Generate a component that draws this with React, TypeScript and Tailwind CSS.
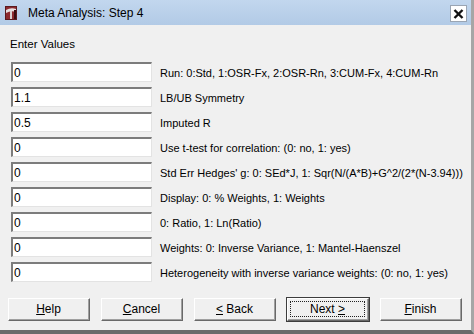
import React from 'react';

const rows: { value: string; label: string }[] = [
  { value: '0', label: 'Run: 0:Std, 1:OSR-Fx, 2:OSR-Rn, 3:CUM-Fx, 4:CUM-Rn' },
  { value: '1.1', label: 'LB/UB Symmetry' },
  { value: '0.5', label: 'Imputed R' },
  { value: '0', label: 'Use t-test for correlation: (0: no, 1: yes)' },
  { value: '0', label: "Std Err Hedges' g: 0: SEd*J, 1: Sqr(N/(A*B)+G^2/(2*(N-3.94)))" },
  { value: '0', label: 'Display: 0: % Weights, 1: Weights' },
  { value: '0', label: '0: Ratio, 1: Ln(Ratio)' },
  { value: '0', label: 'Weights: 0: Inverse Variance, 1: Mantel-Haenszel' },
  { value: '0', label: 'Heterogeneity with inverse variance weights: (0: no, 1: yes)' },
];

const AppIcon = () => (
  <svg width="12" height="14" viewBox="0 0 12 14">
    <rect x="0" y="0" width="12" height="14" fill="#5a1a1e" />
    <rect x="1" y="1" width="10" height="12" fill="#8c2a2f" />
    <path d="M1 4 Q6 1 11 3 L11 6 Q6 4 1 7 Z" fill="#e8e0e0" />
    <rect x="5" y="5" width="2" height="8" fill="#d9d0d0" />
    <rect x="9" y="4" width="2" height="9" fill="#3a0d10" />
  </svg>
);

const Button = ({ children, isDefault }: { children: React.ReactNode; isDefault?: boolean }) => (
  <div
    className={`w-[84px] h-[25px] shrink-0 ${
      isDefault ? 'border border-[#3c3c3c]' : 'border border-transparent'
    }`}
  >
    <div className="w-full h-full border-t border-l border-white border-b border-r border-b-[#696969] border-r-[#696969] bg-[#f0f0f0]">
      <div className="w-full h-full border-b border-r border-[#a0a0a0] flex items-center justify-center p-[2px]">
        <div
          className={`w-full h-full flex items-center justify-center text-[12px] text-black ${
            isDefault ? 'border border-dotted border-[#222]' : ''
          }`}
        >
          {children}
        </div>
      </div>
    </div>
  </div>
);

export default function App() {
  return (
    <div
      className="w-[474px] h-[334px] bg-[#f0f0f0] flex flex-col border-r-[3px] border-r-[#a6a6a6] border-b-[4px] border-b-[#6b6b6b] overflow-hidden"
      style={{ fontFamily: '"Liberation Sans", Arial, sans-serif' }}
    >
      <div className="h-[25px] shrink-0 bg-gradient-to-b from-[#c2d7ee] to-[#b2cae6] flex items-center pl-[5px] pr-[4px]">
        <AppIcon />
        <span className="ml-[11px] text-[12px] text-black">Meta Analysis: Step 4</span>
        <div className="ml-auto mt-[2px] w-[17px] h-[17px] bg-white border border-[#9aa5b3] flex items-center justify-center">
          <svg width="11" height="10" viewBox="0 0 11 10">
            <path d="M1.5 1 L9.5 9 M9.5 1 L1.5 9" stroke="#111" strokeWidth="2.4" />
          </svg>
        </div>
      </div>

      <div className="pl-[10px] pt-[12px] text-[11.5px] leading-[14px] text-black">Enter Values</div>

      <div className="flex flex-col gap-[5px] mt-[11px] pl-[11px]">
        {rows.map((r, i) => (
          <div key={i} className="flex items-center h-[20px]">
            <div className="w-[141px] shrink-0 h-[20px] bg-white border-t-2 border-l-2 border-t-[#7c7c7c] border-l-[#7c7c7c] border-b border-r border-b-[#e3e3e3] border-r-[#e3e3e3] flex items-center pl-[1px] text-[12px] text-black">
              {r.value}
            </div>
            <span className="ml-[8px] mt-[2px] text-[11px] text-black whitespace-nowrap">{r.label}</span>
          </div>
        ))}
      </div>

      <div className="flex gap-[9px] pl-[7px] mt-[15px]">
        <Button>
          <span><span className="underline">H</span>elp</span>
        </Button>
        <Button>
          <span><span className="underline">C</span>ancel</span>
        </Button>
        <Button>
          <span><span className="underline">&lt;</span> Back</span>
        </Button>
        <Button isDefault>
          <span>Next <span className="underline">&gt;</span></span>
        </Button>
        <Button>
          <span><span className="underline">F</span>inish</span>
        </Button>
      </div>
    </div>
  );
}
